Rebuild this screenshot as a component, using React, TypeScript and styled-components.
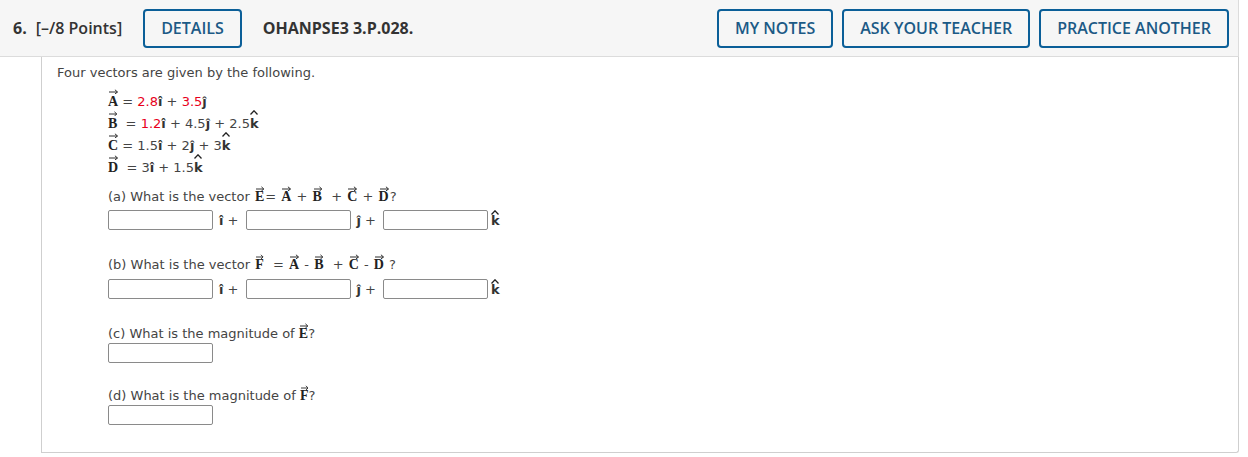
import { createGlobalStyle } from 'styled-components'
import styled from "styled-components";

const Global = createGlobalStyle`
body {
  margin: 0;
  background: #fff;
  font-family: "DejaVu Sans", Verdana, sans-serif;
}
`;

const Vec = ({ l, $pad }: { l: string; $pad?: boolean }) => (
    <VecBox $pad={$pad}>
        {l}
        <VecArrow viewBox="0 0 10 5" preserveAspectRatio="none">
            <path d="M0 3 H9 M6.5 0.8 L9.4 3 L6.5 5" fill="none" stroke="#222" strokeWidth="1" />
        </VecArrow>
    </VecBox>
)

const KHat = () => (
    <UnitK>
        k
        <Hat viewBox="0 0 8 5">
            <path d="M0.5 4.5 L4 0.8 L7.5 4.5" fill="none" stroke="#222" strokeWidth="1.3" />
        </Hat>
    </UnitK>
)

const Components = () => (
    <AnswerRow $top={0}>
        <Field />
        <Sep><Unit>î</Unit> +</Sep>
        <Field />
        <Sep><Unit>ĵ</Unit> +</Sep>
        <Field />
        <Sep $last><KHat /></Sep>
    </AnswerRow>
)

const App = () => {

  return (
    <Page>
        <Global />
        <Header>
            <Num>6.</Num>
            <Points>[–/8 Points]</Points>
            <OutlineButton>DETAILS</OutlineButton>
            <Code>OHANPSE3 3.P.028.</Code>

            <Actions>
                <OutlineButton>MY NOTES</OutlineButton>
                <OutlineButton>ASK YOUR TEACHER</OutlineButton>
                <OutlineButton>PRACTICE ANOTHER</OutlineButton>
            </Actions>
        </Header>

        <Panel>
            <Intro>Four vectors are given by the following.</Intro>

            <Indented>
                <VecLine>
                    <Vec l="A" /> = <Red>2.8</Red><Unit>î</Unit> + <Red>3.5</Red><Unit>ĵ</Unit>
                </VecLine>
                <VecLine>
                    <Vec l="B" />&nbsp; = <Red>1.2</Red><Unit>î</Unit> + 4.5<Unit>ĵ</Unit> + 2.5<KHat />
                </VecLine>
                <VecLine>
                    <Vec l="C" /> = 1.5<Unit>î</Unit> + 2<Unit>ĵ</Unit> + 3<KHat />
                </VecLine>
                <VecLine>
                    <Vec l="D" />&nbsp; = 3<Unit>î</Unit> + 1.5<KHat />
                </VecLine>

                <Question $top={9}>
                    (a) What is the vector <Vec l="E" $pad />= <Vec l="A" $pad /> + <Vec l="B" $pad />&nbsp; + <Vec l="C" $pad /> + <Vec l="D" $pad />?
                </Question>
                <Gap $h={4} />
                <Components />

                <Question $top={26}>
                    (b) What is the vector <Vec l="F" $pad />&nbsp; = <Vec l="A" $pad /> - <Vec l="B" $pad />&nbsp; + <Vec l="C" $pad /> - <Vec l="D" $pad /> ?
                </Question>
                <Gap $h={5} />
                <Components />

                <Question $top={26}>
                    (c) What is the magnitude of <Vec l="E" />?
                </Question>
                <AnswerRow $top={0}>
                    <Field />
                </AnswerRow>

                <Question $top={24}>
                    (d) What is the magnitude of <Vec l="F" />?
                </Question>
                <AnswerRow $top={0}>
                    <Field />
                </AnswerRow>
            </Indented>
        </Panel>
    </Page>
  )
}

export default App

const Page = styled.div`
width: 1239px;
`;

const Header = styled.div`
height: 57px;
box-sizing: border-box;
display: flex;
align-items: center;
padding: 0 9px 0 13px;
background-color: #f6f6f6;
border-bottom: 1px solid #dcdcdc;
border-right: 1px solid #dcdcdc;
font-family: "Open Sans", sans-serif;
font-size: 16px;
color: #333;
`;

const Num = styled.div`
font-weight: 700;
margin-right: 9px;
`;

const Points = styled.div`
font-weight: 600;
margin-right: 21px;
`;

const Code = styled.div`
font-weight: 700;
margin-left: 21px;
`;

const Actions = styled.div`
margin-left: auto;
display: flex;
gap: 9px;
`;

const OutlineButton = styled.div`
height: 39px;
box-sizing: border-box;
display: flex;
align-items: center;
padding: 0 16px;
border: 2px solid #0b5f98;
border-radius: 4px;
background: #f6f6f6;
color: #1c5a86;
font-size: 16px;
font-weight: 600;
`;

const Panel = styled.div`
margin-left: 41px;
height: 396px;
box-sizing: border-box;
padding: 7px 15px 0 15px;
border: 1px solid #cfcfcf;
border-top: none;
border-bottom-right-radius: 3px;
font-size: 13px;
color: #444;
`;

const Intro = styled.div`
line-height: 18px;
`;

const Indented = styled.div`
padding-left: 51px;
margin-top: 9px;
`;

const VecLine = styled.div`
height: 22px;
line-height: 22px;
white-space: nowrap;
`;

const Red = styled.span`
color: #e8001c;
`;

const Unit = styled.span`
font-weight: 700;
color: #333;
`;

const UnitK = styled.span`
position: relative;
display: inline-block;
font-weight: 700;
color: #333;
`;

const Hat = styled.svg`
position: absolute;
left: 0;
top: -3px;
width: 8px;
height: 5px;
`;

const VecBox = styled.span<{ $pad?: boolean }>`
position: relative;
display: inline-block;
margin: 0 ${p => (p.$pad ? 1 : 0)}px;
font-family: "Liberation Serif", "Times New Roman", serif;
font-weight: 700;
font-size: 14px;
color: #222;
`;

const VecArrow = styled.svg`
position: absolute;
left: 1px;
top: -2px;
width: calc(100% - 1px);
height: 5px;
`;

const Question = styled.div<{ $top: number }>`
margin-top: ${p => p.$top}px;
line-height: 18px;
white-space: nowrap;
`;

const Gap = styled.div<{ $h: number }>`
height: ${p => p.$h}px;
`;

const AnswerRow = styled.div<{ $top: number }>`
margin-top: ${p => p.$top}px;
height: 20px;
display: flex;
align-items: center;
`;

const Sep = styled.span<{ $last?: boolean }>`
padding: 0 ${p => (p.$last ? 0 : 7)}px 0 ${p => (p.$last ? 3 : 6)}px;
white-space: nowrap;
`;

const Field = styled.div`
width: 105px;
height: 20px;
box-sizing: border-box;
border: 1px solid #8a8a8a;
border-radius: 2px;
background: #fff;
`;
